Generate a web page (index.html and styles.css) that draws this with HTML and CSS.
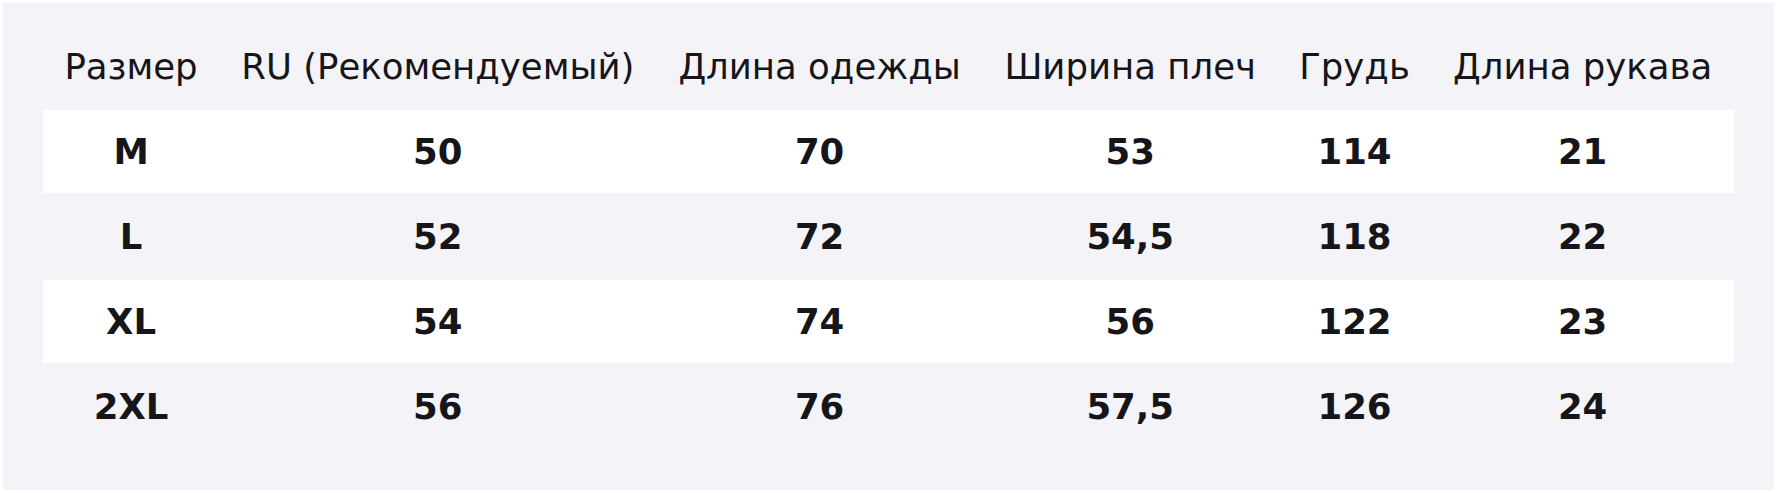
FILE: index.html
```html
<!DOCTYPE html>
<html lang="ru">
<head>
<meta charset="utf-8">
<title>Таблица размеров</title>
<link rel="stylesheet" href="styles.css">
</head>
<body>
<div class="panel">
  <table class="sizes">
    <thead>
      <tr>
        <th>Размер</th>
        <th>RU (Рекомендуемый)</th>
        <th>Длина одежды</th>
        <th>Ширина плеч</th>
        <th>Грудь</th>
        <th>Длина рукава</th>
      </tr>
    </thead>
    <tbody>
      <tr class="alt"><td>M</td><td>50</td><td>70</td><td>53</td><td>114</td><td>21</td></tr>
      <tr><td>L</td><td>52</td><td>72</td><td>54,5</td><td>118</td><td>22</td></tr>
      <tr class="alt"><td>XL</td><td>54</td><td>74</td><td>56</td><td>122</td><td>23</td></tr>
      <tr><td>2XL</td><td>56</td><td>76</td><td>57,5</td><td>126</td><td>24</td></tr>
    </tbody>
  </table>
</div>
</body>
</html>
```
FILE: styles.css
```css
html, body {
  margin: 0;
  background: #ffffff;
}
body {
  font-family: "DejaVu Sans", sans-serif;
  color: #15151a;
}
.panel {
  margin: 3px;
  padding: 40px;
  background: #f4f4f8;
}
.sizes {
  width: 100%;
  border-collapse: separate;
  border-spacing: 0 2px;
  font-size: 35.5px;
}
.sizes th {
  font-weight: normal;
  line-height: 43px;
  padding: 0 21px 20px;
  text-align: center;
  white-space: nowrap;
}
.sizes td {
  font-weight: bold;
  line-height: 43px;
  padding: 20px 21px;
  text-align: center;
}
.sizes tr.alt td {
  background: #ffffff;
}
```
